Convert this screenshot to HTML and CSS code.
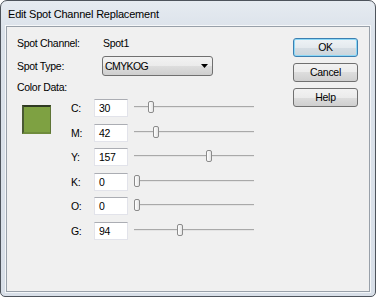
FILE: index.html
```html
<!DOCTYPE html>
<html>
<head>
<meta charset="utf-8">
<link rel="stylesheet" href="styles.css">
</head>
<body>
<div class="window">
  <div class="titlebar">Edit Spot Channel Replacement</div>
  <div class="client">
    <div class="form">
      <div class="row row1">
        <span class="label">Spot Channel:</span>
        <span class="value">Spot1</span>
      </div>
      <div class="row row2">
        <span class="label">Spot Type:</span>
        <div class="select">
          <span class="select-text">CMYKOG</span>
          <svg class="arrow" width="7" height="4" viewBox="0 0 7 4"><polygon points="0,0 7,0 3.5,4" fill="#000"/></svg>
        </div>
      </div>
      <div class="row row3">
        <span class="label">Color Data:</span>
      </div>
      <div class="channels">
        <div class="swatch"></div>
        <div class="grid">
          <span class="ch">C:</span><div class="input">30</div><div class="slider"><div class="track"></div><div class="thumb" style="left:13.7px"></div></div>
          <span class="ch">M:</span><div class="input">42</div><div class="slider"><div class="track"></div><div class="thumb" style="left:19.2px"></div></div>
          <span class="ch">Y:</span><div class="input">157</div><div class="slider"><div class="track"></div><div class="thumb" style="left:71.7px"></div></div>
          <span class="ch">K:</span><div class="input">0</div><div class="slider"><div class="track"></div><div class="thumb" style="left:0px"></div></div>
          <span class="ch">O:</span><div class="input">0</div><div class="slider"><div class="track"></div><div class="thumb" style="left:0px"></div></div>
          <span class="ch">G:</span><div class="input">94</div><div class="slider"><div class="track"></div><div class="thumb" style="left:43px"></div></div>
        </div>
      </div>
    </div>
    <div class="buttons">
      <div class="btn btn-default">OK</div>
      <div class="btn">Cancel</div>
      <div class="btn">Help</div>
    </div>
  </div>
</div>
</body>
</html>
```
FILE: styles.css
```css
html, body {
  margin: 0;
  padding: 0;
  background: #ffffff;
}
body {
  font-family: "Liberation Sans", Arial, sans-serif;
  font-size: 10.5px;
  letter-spacing: -0.3px;
  color: #000;
}
.window {
  width: 376px;
  height: 297px;
  box-sizing: border-box;
  border: 1px solid #4e545c;
  border-radius: 7px 7px 5px 5px;
  background: linear-gradient(#e6ebf1, #dbe2ea 30px, #d8dfe8);
  padding: 0 5px 4px 5px;
  display: flex;
  flex-direction: column;
}
.titlebar {
  height: 25px;
  line-height: 26px;
  padding-left: 2px;
  font-size: 11px;
  letter-spacing: -0.2px;
  color: #000;
}
.client {
  flex: 1;
  background: #f0f0f0;
  border: 1px solid #98a0a9;
  box-shadow: 0 0 0 1px rgba(255,255,255,0.7);
  display: flex;
  align-items: flex-start;
  padding: 6px 11px 0 10px;
}
.form {
  width: 246px;
  display: flex;
  flex-direction: column;
}
.row {
  height: 20px;
  display: flex;
  align-items: center;
}
.row2 { margin-top: 3px; }
.row3 { margin-top: 1px; }
.label {
  width: 85px;
  flex: none;
}
.value { padding-left: 1px; }
.select {
  width: 111px;
  height: 20px;
  box-sizing: border-box;
  border: 1px solid #707070;
  border-radius: 3px;
  background: linear-gradient(#f2f2f2 0%, #ebebeb 50%, #dddddd 50%, #cfcfcf 100%);
  display: flex;
  align-items: center;
  padding: 0 4px 0 2px;
}
.select-text {
  flex: 1;
  letter-spacing: -0.6px;
}
.arrow { display: block; margin-bottom: 1px; }
.channels {
  margin-top: 2px;
  display: flex;
  align-items: flex-start;
}
.swatch {
  width: 29px;
  height: 29px;
  box-sizing: border-box;
  margin: 6px 0 0 5px;
  background: #7ea142;
  border-top: 2px solid #2f3a22;
  border-left: 2px solid #4a5a34;
  border-right: 1px solid #5e7436;
  border-bottom: 2px solid #6f8c3c;
}
.grid {
  margin-left: 20px;
  display: grid;
  grid-template-columns: 23px 34px 122px;
  grid-auto-rows: 18px;
  row-gap: 6.6px;
  align-items: center;
}
.ch { line-height: 18px; }
.input {
  height: 18px;
  box-sizing: border-box;
  background: #fff;
  border: 1px solid #e2e3ea;
  border-top-color: #abadb3;
  padding-left: 4px;
  line-height: 16px;
}
.slider {
  position: relative;
  height: 18px;
  margin-left: 6px;
}
.track {
  width: 120px;
  height: 1px;
  margin-top: 7px;
  background: #a9a9a9;
  border-bottom: 1px solid #e4e4e4;
}
.thumb {
  position: absolute;
  top: 2px;
  width: 6px;
  height: 12px;
  box-sizing: border-box;
  border: 1px solid #8b8b8b;
  border-radius: 2px;
  background: linear-gradient(90deg, #ffffff, #e4e4e4);
}
.buttons {
  margin-left: auto;
  margin-top: 5px;
  display: flex;
  flex-direction: column;
  gap: 6px;
}
.btn {
  width: 65px;
  height: 19px;
  box-sizing: border-box;
  border: 1px solid #707070;
  border-radius: 3px;
  background: linear-gradient(#f2f2f2 0%, #ebebeb 50%, #dddddd 50%, #cfcfcf 100%);
  text-align: center;
  line-height: 17px;
}
.btn-default {
  border-color: #3c7fb1;
  box-shadow: inset 0 0 0 1px #8cd8f6;
  background: linear-gradient(#eef3f6 0%, #e4eaee 50%, #d6dee4 50%, #cbd5dc 100%);
}
```
